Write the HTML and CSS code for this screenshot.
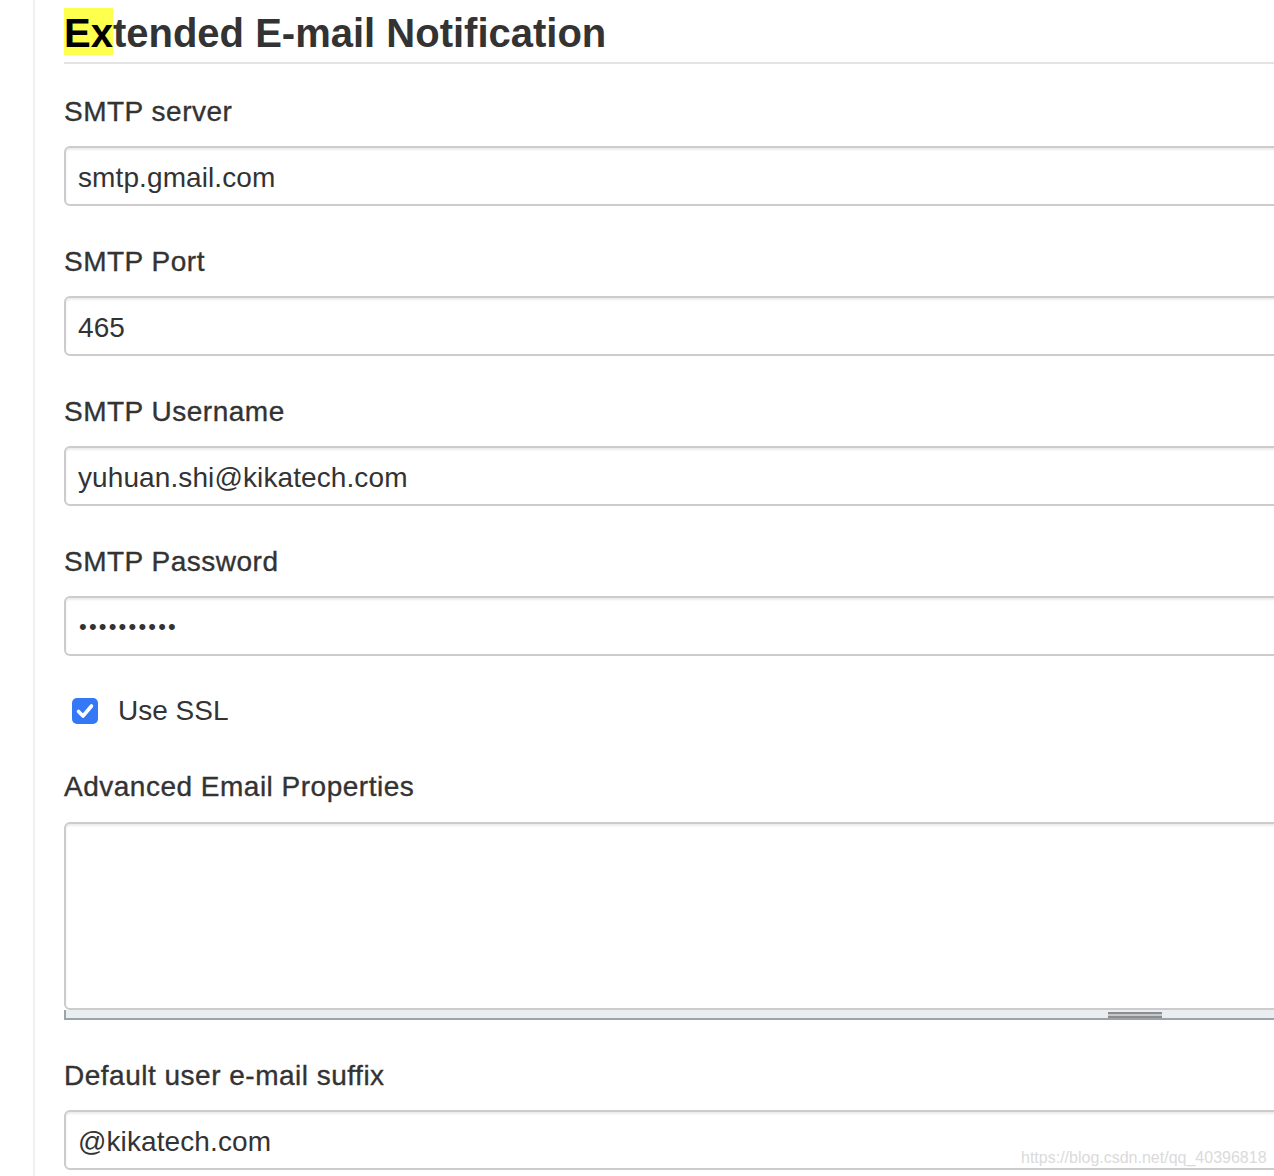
FILE: index.html
```html
<!DOCTYPE html>
<html lang="en">
<head>
<meta charset="utf-8">
<title>Extended E-mail Notification</title>
<link rel="stylesheet" href="styles.css">
</head>
<body>
<div class="page">
  <div class="content">
    <h1 class="section-title"><span class="hl">Ex</span>tended E-mail Notification</h1>

    <div class="field">
      <label class="field-label">SMTP server</label>
      <input class="text-input" type="text" value="smtp.gmail.com">
    </div>

    <div class="field">
      <label class="field-label">SMTP Port</label>
      <input class="text-input" type="text" value="465">
    </div>

    <div class="field">
      <label class="field-label">SMTP Username</label>
      <input class="text-input" type="text" value="yuhuan.shi@kikatech.com">
    </div>

    <div class="field">
      <label class="field-label">SMTP Password</label>
      <input class="text-input password" type="text" value="••••••••••">
    </div>

    <div class="check-row">
      <span class="checkbox">
        <svg viewBox="0 0 26 26" width="26" height="26"><path d="M6.5 13.5 L11 18 L19.5 8" fill="none" stroke="#fff" stroke-width="3.6" stroke-linecap="round" stroke-linejoin="round"/></svg>
      </span>
      <span class="check-label">Use SSL</span>
    </div>

    <div class="field field-area">
      <label class="field-label">Advanced Email Properties</label>
      <textarea class="text-area"></textarea>
      <div class="resize-bar"><span class="grip"></span></div>
    </div>

    <div class="field">
      <label class="field-label">Default user e-mail suffix</label>
      <input class="text-input" type="text" value="@kikatech.com">
    </div>
  </div>
</div>
<div class="watermark">https://blog.csdn.net/qq_40396818</div>
</body>
</html>
```
FILE: styles.css
```css
html, body {
  margin: 0;
  padding: 0;
  background: #fff;
}
body {
  width: 1274px;
  height: 1176px;
  overflow: hidden;
  position: relative;
  font-family: "Liberation Sans", Helvetica, Arial, sans-serif;
  color: #333;
}
.page {
  margin-left: 33px;
  border-left: 2px solid #eef1f4;
  padding-left: 29px;
  height: 1176px;
}
.content {
  width: 1300px;
}
.section-title {
  margin: 0;
  padding-top: 8px;
  padding-bottom: 6px;
  font-size: 40px;
  font-weight: bold;
  line-height: 46px;
  color: #333;
  border-bottom: 2px solid #e4e4e4;
}
.hl {
  display: inline-block;
  background: #ffff4d;
  color: #000;
  height: 47px;
  line-height: 50px;
}
.field {
  margin-top: 40px;
}
.section-title + .field {
  margin-top: 32px;
}
.field-label {
  display: block;
  font-size: 28px;
  line-height: 32px;
  letter-spacing: 0.5px;
  -webkit-text-stroke: 0.35px #333;
  color: #333;
  margin-bottom: 18px;
}
.text-input {
  display: block;
  box-sizing: border-box;
  width: 100%;
  height: 60px;
  margin: 0;
  padding: 3px 12px 0;
  border: 2px solid #ccc;
  border-radius: 6px;
  box-shadow: inset 0 2px 2px rgba(0,0,0,0.075);
  font-family: "Liberation Sans", Helvetica, Arial, sans-serif;
  font-size: 28px;
  letter-spacing: 0.1px;
  color: #333;
  background: #fff;
  outline: none;
}
.password {
  font-size: 22px;
  letter-spacing: 2.2px;
  padding-left: 13px;
  padding-top: 1px;
}
.check-row {
  display: flex;
  align-items: center;
  height: 32px;
  margin-top: 39px;
  padding-left: 8px;
}
.checkbox {
  display: block;
  width: 26px;
  height: 26px;
  border-radius: 5px;
  background: #3478f6;
}
.checkbox svg {
  display: block;
}
.check-label {
  margin-left: 20px;
  font-size: 28px;
  line-height: 32px;
  color: #333;
}
.field-area {
  margin-top: 44px;
}
.field-area .field-label {
  margin-bottom: 19px;
}
.text-area {
  display: block;
  box-sizing: border-box;
  width: 100%;
  height: 188px;
  margin: 0;
  padding: 8px 12px;
  border: 2px solid #ccc;
  border-radius: 6px;
  box-shadow: inset 0 2px 2px rgba(0,0,0,0.075);
  resize: none;
  outline: none;
  background: #fff;
}
.resize-bar {
  box-sizing: border-box;
  height: 10px;
  background: #eaeef1;
  border-left: 2px solid #9aa5ab;
  border-bottom: 2px solid #9aa5ab;
  position: relative;
}
.grip {
  position: absolute;
  left: 1042px;
  top: 2px;
  width: 54px;
  height: 6px;
  background: linear-gradient(#8c8c8c 0 2px, #c8c8c8 2px 4px, #8c8c8c 4px 6px);
}
.watermark {
  position: absolute;
  left: 1021px;
  top: 1148px;
  font-family: "Liberation Sans", Helvetica, Arial, sans-serif;
  font-size: 16px;
  line-height: 20px;
  color: #dadada;
  white-space: nowrap;
}
```
